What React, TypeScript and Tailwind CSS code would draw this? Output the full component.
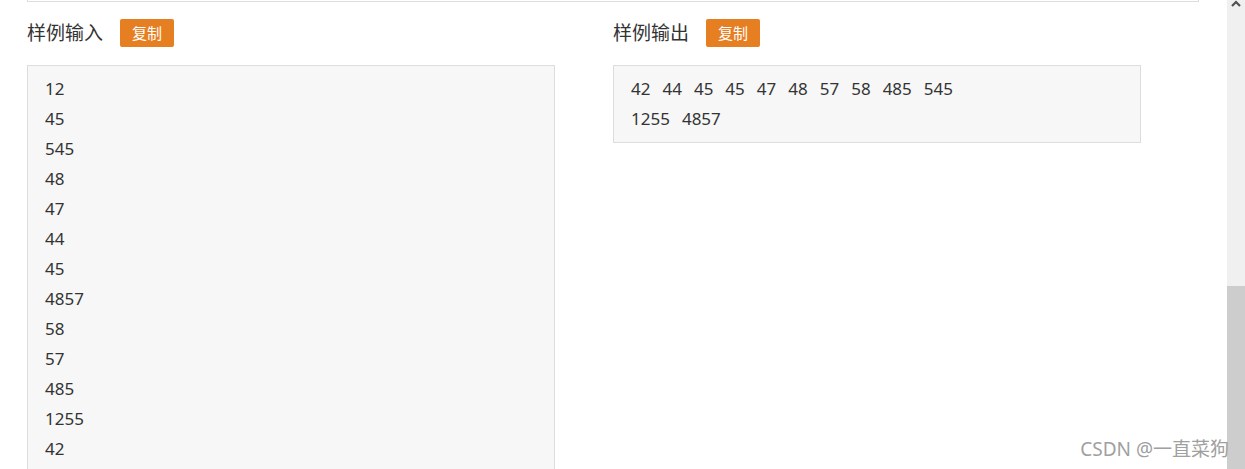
import React from "react";

const font = { fontFamily: '"Noto Sans", "Noto Sans CJK SC", sans-serif' };

const inputLines = [["12"], ["45"], ["545"], ["48"], ["47"], ["44"], ["45"], ["4857"], ["58"], ["57"], ["485"], ["1255"], ["42"]];
const outputLines = [
  ["42", "44", "45", "45", "47", "48", "57", "58", "485", "545"],
  ["1255", "4857"],
];

function Sample({ title, lines, tall }: { title: string; lines: string[][]; tall?: boolean }) {
  return (
    <div className="flex w-1/2 flex-col">
      <div className="flex h-[28px] items-center">
        <span className="text-[19px] leading-none text-[#333]">{title}</span>
        <button className="ml-[17px] h-[28px] w-[54px] rounded-[2px] bg-[#e67e22] text-[15px] text-white">复制</button>
      </div>
      <div
        className={
          "mt-[18px] w-[528px] border border-[#ddd] bg-[#f7f7f7] px-[17px] py-[8px] text-[17px] leading-[30px] text-[#333] " +
          (tall ? "min-h-[500px]" : "")
        }
      >
        {lines.map((l, i) => (
          <div key={i} className="flex gap-[12px] whitespace-pre">
            {l.map((t, j) => (
              <span key={j}>{t}</span>
            ))}
          </div>
        ))}
      </div>
    </div>
  );
}

export default function App() {
  return (
    <div className="relative flex h-[469px] w-full overflow-hidden bg-white" style={font}>
      <div className="flex-1 px-[27px]">
        <div className="h-[2px] w-[1172px] border-x border-b border-[#ddd]" />
        <div className="mt-[17px] flex w-[1172px]">
          <Sample title="样例输入" lines={inputLines} tall />
          <Sample title="样例输出" lines={outputLines} />
        </div>
      </div>
      <div className="flex w-[18px] flex-col bg-[#f0f0f0]">
        <div className="flex h-[17px] items-start justify-center">
          <svg width="10" height="8" viewBox="0 0 10 8">
            <path d="M1 6 L5 2 L9 6" stroke="#505050" strokeWidth="2.2" fill="none" />
          </svg>
        </div>
        <div className="mt-[269px] flex-1 bg-[#cdcdcd]" />
      </div>
      <div className="absolute bottom-[6px] right-[16px] text-[19px] text-[#a0a0a0]">CSDN @一直菜狗</div>
    </div>
  );
}
